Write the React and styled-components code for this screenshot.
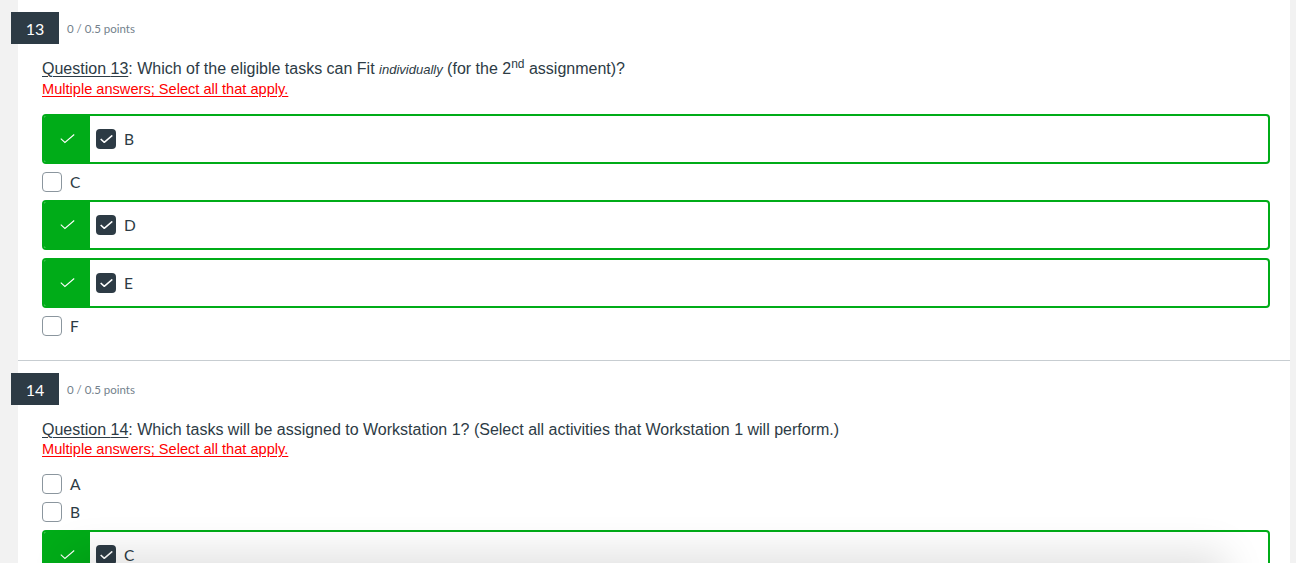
import styled, { createGlobalStyle } from "styled-components";

const GlobalStyle = createGlobalStyle`
	html, body {
		margin: 0;
		padding: 0;
		background: #f2f2f2;
		overflow: hidden;
	}
	body {
		font-family: "Lato", "Liberation Sans", sans-serif;
		color: #2d3b45;
	}
`;

const Page = styled.div`
	height: 563px;
	padding: 0 6px 0 18px;
	overflow: hidden;
`;

const Card = styled.div`
	background: #fff;
	min-height: 100%;
`;

const Question = styled.section`
	padding: 12px 20px 24px 24px;
	border-bottom: ${(p) => (p.$last ? "none" : "1px solid #c7cdd1")};
`;

const Header = styled.div`
	display: flex;
	align-items: center;
	gap: 8px;
	margin-left: -31px;
`;

const Badge = styled.div`
	width: 48px;
	height: 32px;
	background: #2d3b45;
	color: #fff;
	font-family: "Lato", sans-serif;
	font-size: 16px;
	display: flex;
	align-items: center;
	justify-content: center;
`;

const Points = styled.span`
	font-family: "Lato", sans-serif;
	font-size: 11.5px;
	color: #73818c;
`;

const Prompt = styled.div`
	margin-top: 15px;
	font-family: "Liberation Sans", Arial, sans-serif;
	font-size: 16px;
	line-height: 20px;
	color: #2d3b45;

	u {
		text-decoration-thickness: 1px;
		text-underline-offset: 2px;
	}
	em {
		font-size: 13px;
	}
	sup {
		font-size: 12px;
		line-height: 0;
		vertical-align: 6px;
	}
`;

const Hint = styled.div`
	font-family: "Liberation Sans", Arial, sans-serif;
	font-size: 14.6px;
	line-height: 20px;
	margin-top: -1px;
	color: #ff0000;
	text-decoration: underline;
	text-underline-offset: 2px;
`;

const Answers = styled.div`
	margin-top: 15px;
	display: flex;
	flex-direction: column;
	gap: 8px;
`;

const Row = styled.div`
	display: flex;
	align-items: center;
	gap: 8px;
	height: 20px;
`;

const CorrectRow = styled.div`
	display: flex;
	align-items: center;
	height: 50px;
	box-sizing: border-box;
	border: 2px solid #00ac18;
	border-radius: 4px;
	overflow: hidden;
`;

const Flag = styled.div`
	width: 46px;
	align-self: stretch;
	background: #00ac18;
	display: flex;
	align-items: center;
	justify-content: center;
	margin-right: 6px;
`;

const Box = styled.span`
	width: 20px;
	height: 20px;
	box-sizing: border-box;
	border-radius: 4px;
	display: inline-flex;
	align-items: center;
	justify-content: center;
	border: ${(p) => (p.$checked ? "none" : "1px solid #8b969e")};
	background: ${(p) => (p.$checked ? "#2d3b45" : "#fff")};
	margin-right: ${(p) => (p.$checked ? "8px" : "0")};
`;

const Letter = styled.span`
	font-family: "Lato", sans-serif;
	font-size: 15.5px;
	color: #2d3b45;
`;

const FooterShadow = styled.div`
	position: fixed;
	left: 80px;
	right: 80px;
	bottom: -40px;
	height: 40px;
	box-shadow: 0 0 40px 10px rgba(0, 0, 0, 0.12);
	background: #fff;
`;

function Tick({ size = 14, width = 1 }) {
	return (
		<svg width={size} height={size * 0.62} viewBox="0 0 14 9" fill="none">
			<polyline points="0.5,4.5 4.5,8.2 13.5,0.5" stroke="#fff" strokeWidth={width} />
		</svg>
	);
}

function Answer({ label, correct }) {
	if (correct) {
		return (
			<CorrectRow>
				<Flag>
					<Tick size={15} width={1} />
				</Flag>
				<Box $checked>
					<Tick size={13} width={1.8} />
				</Box>
				<Letter>{label}</Letter>
			</CorrectRow>
		);
	}
	return (
		<Row>
			<Box />
			<Letter>{label}</Letter>
		</Row>
	);
}

function QuestionBlock({ num, prompt, answers, last }) {
	return (
		<Question $last={last}>
			<Header>
				<Badge>{num}</Badge>
				<Points>0 / 0.5 points</Points>
			</Header>
			<Prompt>
				<u>Question {num}</u>: {prompt}
			</Prompt>
			<Hint>Multiple answers; Select all that apply.</Hint>
			<Answers>
				{answers.map((a) => (
					<Answer key={a.label} label={a.label} correct={a.correct} />
				))}
			</Answers>
		</Question>
	);
}

export default function App() {
	return (
		<>
			<GlobalStyle />
			<Page>
				<Card>
					<QuestionBlock
						num={13}
						prompt={
							<>
								Which of the eligible tasks can Fit <em>individually</em> (for the 2
								<sup>nd</sup> assignment)?
							</>
						}
						answers={[
							{ label: "B", correct: true },
							{ label: "C" },
							{ label: "D", correct: true },
							{ label: "E", correct: true },
							{ label: "F" },
						]}
					/>
					<QuestionBlock
						num={14}
						last
						prompt="Which tasks will be assigned to Workstation 1? (Select all activities that Workstation 1 will perform.)"
						answers={[
							{ label: "A" },
							{ label: "B" },
							{ label: "C", correct: true },
							{ label: "D" },
						]}
					/>
				</Card>
			</Page>
			<FooterShadow />
		</>
	);
}
